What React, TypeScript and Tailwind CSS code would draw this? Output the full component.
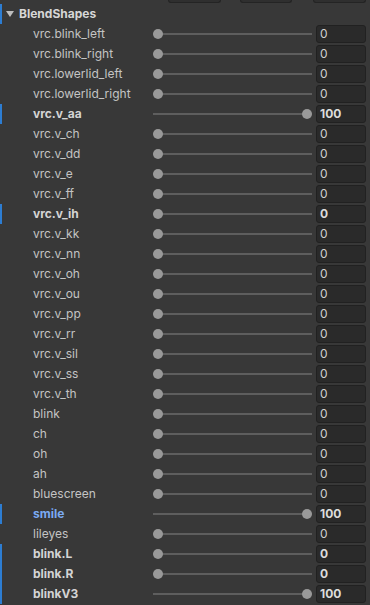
import React from 'react'

type Shape = { name: string; value: number; modified?: boolean; selected?: boolean }

const SHAPES: Shape[] = [
  { name: 'vrc.blink_left', value: 0 },
  { name: 'vrc.blink_right', value: 0 },
  { name: 'vrc.lowerlid_left', value: 0 },
  { name: 'vrc.lowerlid_right', value: 0 },
  { name: 'vrc.v_aa', value: 100, modified: true },
  { name: 'vrc.v_ch', value: 0 },
  { name: 'vrc.v_dd', value: 0 },
  { name: 'vrc.v_e', value: 0 },
  { name: 'vrc.v_ff', value: 0 },
  { name: 'vrc.v_ih', value: 0, modified: true },
  { name: 'vrc.v_kk', value: 0 },
  { name: 'vrc.v_nn', value: 0 },
  { name: 'vrc.v_oh', value: 0 },
  { name: 'vrc.v_ou', value: 0 },
  { name: 'vrc.v_pp', value: 0 },
  { name: 'vrc.v_rr', value: 0 },
  { name: 'vrc.v_sil', value: 0 },
  { name: 'vrc.v_ss', value: 0 },
  { name: 'vrc.v_th', value: 0 },
  { name: 'blink', value: 0 },
  { name: 'ch', value: 0 },
  { name: 'oh', value: 0 },
  { name: 'ah', value: 0 },
  { name: 'bluescreen', value: 0 },
  { name: 'smile', value: 100, modified: true, selected: true },
  { name: 'lileyes', value: 0 },
  { name: 'blink.L', value: 0, modified: true },
  { name: 'blink.R', value: 0, modified: true },
  { name: 'blinkV3', value: 100, modified: true },
]

// slider: track + round thumb, thumb offset computed from value
function Slider({ value }: { value: number }): React.JSX.Element {
  return (
    <div className="relative h-full flex-1 flex items-center">
      <div className="h-[2px] w-full bg-[#5e5e5e]" />
      <div
        className="absolute top-1/2 -mt-[5px] h-[10px] w-[10px] rounded-full bg-[#999999]"
        style={{ left: `calc(${value / 100} * (100% - 10px))` }}
      />
    </div>
  )
}

function Row({ shape }: { shape: Shape }): React.JSX.Element {
  const bold = shape.modified
  return (
    <div className="flex h-[20px] items-center">
      <div className={`h-full w-[2px] ${shape.modified ? 'bg-[#2d7dd2]' : ''}`} />
      <div
        className={`w-[151px] pl-[31px] truncate text-[12px] ${
          shape.selected
            ? 'font-bold text-[#7baaf2]'
            : bold
              ? 'font-bold text-[#d4d4d4]'
              : 'text-[#c4c4c4]'
        }`}
      >
        {shape.name}
      </div>
      <div className="flex h-full w-[159px] items-center">
        <Slider value={shape.value} />
      </div>
      <div
        className={`ml-[4px] flex h-[18px] w-[50px] items-center rounded-[3px] border border-[#212121] bg-[#2a2a2a] pl-[3px] text-[12px] ${
          bold ? 'font-bold text-[#dcdcdc]' : 'text-[#d0d0d0]'
        }`}
      >
        {shape.value}
      </div>
    </div>
  )
}

export default function App(): React.JSX.Element {
  return (
    <div
      className="h-[605px] w-[370px] overflow-hidden bg-[#383838]"
      style={{ fontFamily: 'Inter, "Noto Sans", sans-serif' }}
    >
      {/* bottoms of the toolbar buttons above */}
      <div className="flex h-[3px] pl-[168px]">
        <div className="w-[53px] rounded-b-[3px] border-x border-b border-[#242424] bg-[#2f2f2f]" />
        <div className="ml-[19px] w-[52px] rounded-b-[3px] border-x border-b border-[#242424] bg-[#2f2f2f]" />
        <div className="ml-[21px] w-[53px] rounded-b-[3px] border-x border-b border-[#242424] bg-[#2f2f2f]" />
      </div>

      <div className="mt-[1px] flex h-[20px] items-center">
        <div className="h-full w-[2px] bg-[#2d7dd2]" />
        <svg width="8" height="8" viewBox="0 0 8 8" className="ml-[4px]">
          <path d="M0 1 L8 1 L4 7 Z" fill="#bdbdbd" />
        </svg>
        <span className="ml-[5px] text-[12px] font-bold text-[#d6d6d6]">BlendShapes</span>
      </div>

      <div className="flex flex-col">
        {SHAPES.map((s) => (
          <Row key={s.name} shape={s} />
        ))}
      </div>
    </div>
  )
}
